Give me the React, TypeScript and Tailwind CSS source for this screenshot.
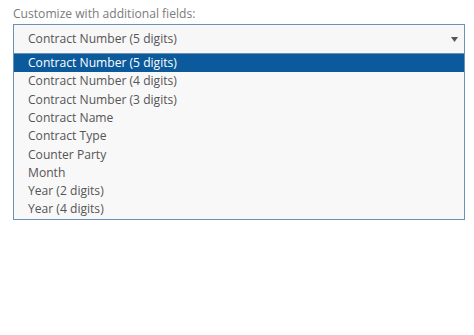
import React from "react";

const items = [
  "Contract Number (5 digits)",
  "Contract Number (4 digits)",
  "Contract Number (3 digits)",
  "Contract Name",
  "Contract Type",
  "Counter Party",
  "Month",
  "Year (2 digits)",
  "Year (4 digits)",
];

export default function App() {
  return (
    <div className="w-[474px] h-[335px] bg-white" style={{ fontFamily: '"Open Sans", "Noto Sans", sans-serif' }}>
      <div className="pt-[5px] pl-[13px] pr-[9px]">
        <div className="text-[12.1px] leading-[18px] text-[#7b7b7b] h-[19px]">Customize with additional fields:</div>
        <div className="border border-[#6b91b8] bg-[#f7f7f7] h-[30px] flex items-center justify-between pl-[14px] pr-[5px]">
          <span className="text-[12.1px] text-[#555]">Contract Number (5 digits)</span>
          <svg width="7" height="5" viewBox="0 0 7 5" className="mr-[1px]">
            <polygon points="0,0 7,0 3.5,5" fill="#555" />
          </svg>
        </div>
        <div className="border border-t-0 border-[#6b91b8] bg-[#f8f8f8]">
          {items.map((t, i) => (
            <div
              key={t}
              className={
                "h-[18.3px] flex items-center pl-[14px] text-[12.1px] " +
                (i === 0 ? "bg-[#0b5a9c] text-white" : "text-[#555]")
              }
            >
              {t}
            </div>
          ))}
        </div>
      </div>
    </div>
  );
}
